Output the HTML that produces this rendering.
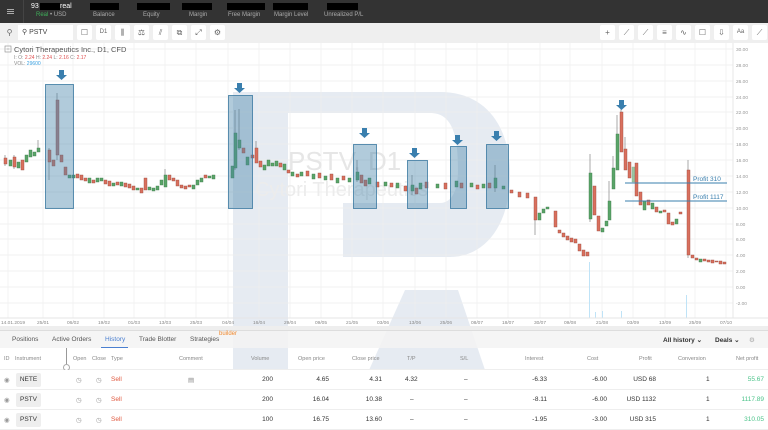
<!DOCTYPE html>
<html><head><meta charset="utf-8"><style>
*{margin:0;padding:0;box-sizing:border-box}
body{width:768px;height:428px;overflow:hidden;font-family:"Liberation Sans",sans-serif;background:#fff;position:relative;font-size:7px;color:#333}
.a{position:absolute}
.top{left:0;top:0;width:768px;height:23px;background:#333}
.blk{position:absolute;background:#000;height:7px;top:3px}
.lbl{position:absolute;top:12px;color:#aaa;font-size:6px}
.tb{left:0;top:23px;width:768px;height:20px;background:#efefef}
.btn{position:absolute;top:2px;width:15px;height:15px;background:#fff;border-radius:2px;color:#666;font-size:8px;text-align:center;line-height:15px}
.tabs{left:0;top:330px;width:768px;height:18px;background:rgba(243,243,243,.85);border-top:1px solid #ddd}
.tab{position:absolute;top:5px;font-size:6.5px;color:#555}
.hdr{left:0;top:348px;width:768px;height:22px;border-bottom:1px solid #eee}
.h{position:absolute;top:8px;font-size:5.5px;color:#888}
.row{position:absolute;left:0;width:768px;height:20px;border-bottom:1px solid #eee;background:#fff}
.c{position:absolute;top:6px;font-size:6.5px;color:#333}
.r{text-align:right}
.ins{position:absolute;left:16px;top:3px;width:25px;height:14px;background:#eee;border-radius:2px;font-size:6.5px;text-align:center;line-height:14px;color:#333}
</style></head><body>
<svg class="a" style="left:0;top:0" width="768" height="428">
 <g fill="rgba(205,215,230,0.5)">
  <path d="M233 92H440C485 92 510 125 510 175C510 225 485 257 450 257H343V203H440C452 203 458 190 458 170C458 130 450 113 430 113H288V428H233Z"/>
  <path d="M405 290H458L485 370V428H343Z"/>
 </g>
</svg>
<div class="a top">
 <div class="a" style="left:7px;top:9px;width:7px;height:1px;background:#aaa;box-shadow:0 2px #aaa,0 4px #aaa"></div>
 <div class="a" style="left:23px;top:0;width:1px;height:23px;background:#444"></div>
 <div class="a" style="left:31px;top:3px;color:#fff;font-size:7px">93</div>
 <div class="blk" style="left:40px;width:20px"></div>
 <div class="a" style="left:60px;top:3px;color:#fff;font-size:7px">real</div>
 <div class="a" style="left:36px;top:12px;color:#3fae5a;font-size:6px">Real <span style="color:#aaa">• USD</span></div>
 <div class="blk" style="left:90px;width:29px"></div><div class="lbl" style="left:93px">Balance</div>
 <div class="blk" style="left:137px;width:33px"></div><div class="lbl" style="left:143px">Equity</div>
 <div class="blk" style="left:182px;width:30px"></div><div class="lbl" style="left:189px">Margin</div>
 <div class="blk" style="left:227px;width:38px"></div><div class="lbl" style="left:228px">Free Margin</div>
 <div class="blk" style="left:273px;width:35px"></div><div class="lbl" style="left:274px">Margin Level</div>
 <div class="blk" style="left:327px;width:31px"></div><div class="lbl" style="left:324px">Unrealized P/L</div>
</div>
<div class="a tb">
 <div class="btn" style="left:2px;background:none">⚲</div>
 <div class="a" style="left:18px;top:2px;width:55px;height:15px;background:#fff;font-size:7px;line-height:15px;padding-left:4px;color:#444">⚲ PSTV</div>
 <div class="btn" style="left:77px">☐</div><div class="btn" style="left:96px;font-size:6px">D1</div>
 <div class="btn" style="left:115px">⫼</div><div class="btn" style="left:134px">⚖</div>
 <div class="btn" style="left:153px">⫽</div><div class="btn" style="left:172px">⧉</div>
 <div class="btn" style="left:191px">⤢</div><div class="btn" style="left:210px">⚙</div>
 <div class="btn" style="left:600px">+</div><div class="btn" style="left:619px">⟋</div>
 <div class="btn" style="left:638px">⟋</div><div class="btn" style="left:657px">≡</div>
 <div class="btn" style="left:676px">∿</div><div class="btn" style="left:695px">☐</div>
 <div class="btn" style="left:714px">⇩</div><div class="btn" style="left:733px;font-size:6px">Aa</div>
 <div class="btn" style="left:752px">⟋</div>
</div>
<svg class="a" style="left:0;top:43px" width="768" height="287" viewBox="0 43 768 287">
 <g stroke="#eeeeee" stroke-width="0.7">
  <path d="M0 49H733M0 65H733M0 81H733M0 97H733M0 112H733M0 128H733M0 144H733M0 160H733M0 176H733M0 192H733M0 208H733M0 224H733M0 239H733M0 255H733M0 271H733M0 287H733M0 303H733"/>
  <path d="M8 43V318M43 43V318M73 43V318M104 43V318M134 43V318M165 43V318M196 43V318M228 43V318M259 43V318M290 43V318M321 43V318M352 43V318M383 43V318M415 43V318M446 43V318M477 43V318M508 43V318M540 43V318M570 43V318M602 43V318M633 43V318M665 43V318M695 43V318M726 43V318"/>
 </g>
 <line x1="733" y1="43" x2="733" y2="318" stroke="#ddd" stroke-width="0.7"/>
 <text x="288" y="170" font-size="26" fill="#e6e6e6">PSTV, D1</text>
 <text x="255" y="196" font-size="20" fill="#ececec">Cytori Therapeutics</text>
 <g fill="#bfe3f7"><rect x="589" y="262" width="1" height="56"/><rect x="686" y="295" width="1" height="23"/><rect x="595" y="312" width="1" height="6"/><rect x="602" y="311" width="1" height="7"/><rect x="621" y="311" width="1" height="7"/></g>
 <g stroke="#555" stroke-width="0.5">
 <path d="M5 155V166M14 155V169M38 140V152M49 148V180M57 93V160M165 169V187M235 110V170M239 109V150M256 141V163M357 160V182M412 175V195M495 165V192M535 197V235M590 154V222M609 181V220M613 156V189M617 115V170M621 105V152M625 137V170M688 160V258"/>
 </g>
 <g fill="#5aa469" stroke="#3d7a4a" stroke-width="0.4">
 <rect x="9" y="160" width="3" height="6"/><rect x="17" y="162" width="3" height="6"/><rect x="25" y="155" width="3" height="7"/><rect x="29" y="150" width="3" height="7"/><rect x="33" y="152" width="3" height="4"/><rect x="37" y="148" width="3" height="4"/>
 <rect x="68" y="175" width="3" height="3"/><rect x="72" y="175" width="3" height="3"/><rect x="88" y="178" width="3" height="5"/><rect x="96" y="178" width="3" height="4"/><rect x="100" y="178" width="3" height="3"/><rect x="112" y="183" width="3" height="3"/><rect x="120" y="182" width="3" height="4"/><rect x="136" y="188" width="3" height="2"/><rect x="148" y="187" width="3" height="3"/><rect x="152" y="188" width="3" height="3"/><rect x="156" y="186" width="3" height="4"/><rect x="160" y="180" width="3" height="5"/><rect x="164" y="175" width="3" height="12"/><rect x="192" y="185" width="3" height="4"/><rect x="196" y="180" width="3" height="5"/><rect x="200" y="178" width="3" height="4"/><rect x="208" y="176" width="3" height="2"/><rect x="212" y="175" width="3" height="4"/>
 <rect x="231" y="166" width="3" height="12"/><rect x="234" y="133" width="3" height="35"/><rect x="238" y="140" width="3" height="8"/><rect x="246" y="157" width="3" height="8"/><rect x="263" y="165" width="3" height="5"/><rect x="267" y="160" width="3" height="6"/><rect x="271" y="163" width="3" height="3"/><rect x="275" y="161" width="3" height="5"/><rect x="283" y="164" width="3" height="6"/><rect x="291" y="172" width="3" height="4"/>
 <rect x="300" y="172" width="3" height="4"/><rect x="312" y="174" width="3" height="5"/><rect x="324" y="176" width="3" height="4"/><rect x="336" y="178" width="3" height="5"/><rect x="348" y="178" width="3" height="4"/><rect x="356" y="172" width="3" height="8"/><rect x="368" y="178" width="3" height="6"/><rect x="384" y="182" width="3" height="4"/><rect x="396" y="183" width="3" height="5"/><rect x="411" y="185" width="3" height="6"/><rect x="419" y="183" width="3" height="6"/><rect x="436" y="184" width="3" height="4"/><rect x="455" y="181" width="3" height="6"/><rect x="470" y="183" width="3" height="4"/><rect x="482" y="184" width="3" height="4"/><rect x="494" y="178" width="3" height="10"/><rect x="502" y="186" width="3" height="3"/>
 <rect x="538" y="213" width="3" height="7"/><rect x="542" y="209" width="3" height="4"/><rect x="546" y="207" width="3" height="2"/><rect x="589" y="173" width="3" height="46"/><rect x="601" y="228" width="3" height="4"/><rect x="605" y="221" width="3" height="5"/><rect x="608" y="201" width="3" height="19"/><rect x="612" y="168" width="3" height="21"/><rect x="616" y="134" width="3" height="36"/><rect x="632" y="167" width="3" height="15" opacity=".6"/><rect x="643" y="201" width="3" height="9"/><rect x="651" y="203" width="3" height="6"/><rect x="659" y="211" width="3" height="2"/><rect x="675" y="219" width="3" height="5"/><rect x="699" y="259" width="3" height="3"/>
 </g>
 <g fill="#d9705e" stroke="#9a4a3e" stroke-width="0.4">
 <rect x="4" y="158" width="3" height="6"/><rect x="13" y="157" width="3" height="10"/><rect x="21" y="160" width="3" height="10"/>
 <rect x="48" y="150" width="3" height="12"/><rect x="52" y="160" width="3" height="6"/><rect x="56" y="100" width="3" height="55" fill="#b77e7e"/><rect x="60" y="155" width="3" height="7"/><rect x="64" y="167" width="3" height="8"/><rect x="76" y="174" width="3" height="4"/><rect x="80" y="175" width="3" height="5"/><rect x="84" y="178" width="3" height="3"/><rect x="92" y="180" width="3" height="3"/><rect x="104" y="180" width="3" height="4"/><rect x="108" y="181" width="3" height="5"/><rect x="116" y="182" width="3" height="3"/><rect x="124" y="183" width="3" height="4"/><rect x="128" y="184" width="3" height="4"/><rect x="132" y="186" width="3" height="4"/><rect x="140" y="188" width="3" height="5"/><rect x="144" y="178" width="3" height="12"/><rect x="168" y="175" width="3" height="5"/><rect x="172" y="178" width="3" height="3"/><rect x="176" y="180" width="3" height="6"/><rect x="180" y="185" width="3" height="3"/><rect x="184" y="186" width="3" height="3"/><rect x="188" y="185" width="3" height="2"/><rect x="204" y="175" width="3" height="3"/>
 <rect x="242" y="148" width="3" height="5"/><rect x="251" y="155" width="3" height="3"/><rect x="255" y="148" width="3" height="15"/><rect x="259" y="161" width="3" height="6"/><rect x="279" y="163" width="3" height="4"/><rect x="287" y="170" width="3" height="3"/>
 <rect x="296" y="174" width="3" height="3"/><rect x="306" y="171" width="3" height="5"/><rect x="318" y="173" width="3" height="5"/><rect x="330" y="174" width="3" height="6"/><rect x="342" y="176" width="3" height="4"/><rect x="360" y="175" width="3" height="8"/><rect x="364" y="180" width="3" height="6"/><rect x="376" y="182" width="3" height="5"/><rect x="390" y="183" width="3" height="4"/><rect x="404" y="186" width="3" height="5"/><rect x="415" y="188" width="3" height="6"/><rect x="425" y="182" width="3" height="6"/><rect x="444" y="183" width="3" height="6"/><rect x="460" y="183" width="3" height="5"/><rect x="476" y="185" width="3" height="4"/><rect x="488" y="183" width="3" height="5"/><rect x="510" y="190" width="3" height="3"/><rect x="518" y="192" width="3" height="5"/><rect x="526" y="193" width="3" height="5"/><rect x="534" y="197" width="3" height="23"/>
 <rect x="554" y="211" width="3" height="16"/><rect x="558" y="230" width="3" height="3"/><rect x="562" y="233" width="3" height="4"/><rect x="566" y="236" width="3" height="4"/><rect x="570" y="238" width="3" height="4"/><rect x="574" y="239" width="3" height="4"/><rect x="578" y="244" width="3" height="7"/><rect x="582" y="250" width="3" height="6"/><rect x="586" y="252" width="3" height="4"/><rect x="593" y="186" width="3" height="29"/><rect x="597" y="216" width="3" height="15"/><rect x="620" y="112" width="3" height="40"/><rect x="624" y="149" width="3" height="21"/><rect x="628" y="162" width="3" height="16"/><rect x="635" y="163" width="3" height="33"/><rect x="639" y="192" width="3" height="13"/><rect x="647" y="200" width="3" height="5"/><rect x="655" y="207" width="3" height="5"/><rect x="663" y="210" width="3" height="2"/><rect x="667" y="213" width="3" height="11"/><rect x="671" y="222" width="3" height="3"/><rect x="679" y="212" width="3" height="2"/><rect x="687" y="170" width="3" height="85"/><rect x="691" y="255" width="3" height="3"/><rect x="695" y="258" width="3" height="2"/><rect x="703" y="259" width="3" height="2"/><rect x="707" y="260" width="3" height="2"/><rect x="711" y="260" width="3" height="3"/><rect x="715" y="261" width="3" height="1"/><rect x="719" y="261" width="3" height="3"/><rect x="723" y="262" width="3" height="2"/>
 </g>
 <g fill="rgba(70,130,170,0.42)" stroke="#3a78a0" stroke-width="0.8">
  <rect x="45.5" y="84.5" width="28" height="124"/><rect x="228.5" y="95.5" width="24" height="113"/><rect x="353.5" y="144.5" width="23" height="64"/><rect x="407.5" y="160.5" width="20" height="48"/><rect x="450.5" y="146.5" width="16" height="62"/><rect x="486.5" y="144.5" width="22" height="64"/>
 </g>
 <g fill="#3a7fae">
  <path d="M59 70h5v5h3l-5.5 5l-5.5-5h3z"/><path d="M237 83h5v5h3l-5.5 5l-5.5-5h3z"/><path d="M362 128h5v5h3l-5.5 5l-5.5-5h3z"/><path d="M412 148h5v5h3l-5.5 5l-5.5-5h3z"/><path d="M455 135h5v5h3l-5.5 5l-5.5-5h3z"/><path d="M494 131h5v5h3l-5.5 5l-5.5-5h3z"/><path d="M619 100h5v5h3l-5.5 5l-5.5-5h3z"/>
 </g>
 <g stroke="#3a7fae" stroke-width="1"><line x1="625" y1="183" x2="727" y2="183"/><line x1="625" y1="201" x2="727" y2="201"/></g>
 <text x="693" y="181" font-size="6.5" fill="#3a7fae">Profit 310</text>
 <text x="693" y="199" font-size="6.5" fill="#3a7fae">Profit 1117</text>
 <g font-size="4.8" fill="#999">
  <text x="736" y="51">30.00</text><text x="736" y="67">28.00</text><text x="736" y="83">26.00</text><text x="736" y="99">24.00</text><text x="736" y="114">22.00</text><text x="736" y="130">20.00</text><text x="736" y="146">18.00</text><text x="736" y="162">16.00</text><text x="736" y="178">14.00</text><text x="736" y="194">12.00</text><text x="736" y="210">10.00</text><text x="736" y="226">8.00</text><text x="736" y="241">6.00</text><text x="736" y="257">4.00</text><text x="736" y="273">2.00</text><text x="736" y="289">0.00</text><text x="736" y="305">-2.00</text>
 </g>
 <line x1="0" y1="318" x2="768" y2="318" stroke="#e5e5e5"/>
 <g font-size="4.8" fill="#888" text-anchor="middle">
  <text x="13" y="324">14.01.2019</text><text x="43" y="324">25/01</text><text x="73" y="324">06/02</text><text x="104" y="324">19/02</text><text x="134" y="324">01/03</text><text x="165" y="324">13/03</text><text x="196" y="324">25/03</text><text x="228" y="324">04/04</text><text x="259" y="324">16/04</text><text x="290" y="324">29/04</text><text x="321" y="324">09/05</text><text x="352" y="324">21/05</text><text x="383" y="324">03/06</text><text x="415" y="324">13/06</text><text x="446" y="324">25/06</text><text x="477" y="324">08/07</text><text x="508" y="324">18/07</text><text x="540" y="324">30/07</text><text x="570" y="324">09/08</text><text x="602" y="324">21/08</text><text x="633" y="324">03/09</text><text x="665" y="324">13/09</text><text x="695" y="324">25/09</text><text x="726" y="324">07/10</text>
 </g>
 <rect x="0" y="326" width="768" height="4" fill="#eee"/>
 <rect x="5" y="46" width="6" height="6" fill="none" stroke="#888" stroke-width="0.6"/><line x1="6.5" y1="49" x2="9.5" y2="49" stroke="#888" stroke-width="0.6"/>
 <text x="14" y="52" font-size="7.5" fill="#555">Cytori Therapeutics Inc.,  D1,  CFD</text>
 <text x="14" y="59" font-size="5" fill="#888">I: O: <tspan fill="#e05050">2.24</tspan> H: <tspan fill="#e05050">2.24</tspan> L: <tspan fill="#e05050">2.16</tspan> C: <tspan fill="#e05050">2.17</tspan></text>
 <text x="14" y="65" font-size="5" fill="#888">VOL: <tspan fill="#3aa0e0">29600</tspan></text>
</svg>
<div class="a tabs">
 <div class="tab" style="left:12px">Positions</div><div class="tab" style="left:52px">Active Orders</div>
 <div class="tab" style="left:105px;color:#4a7fd0">History</div><div class="a" style="left:101px;top:16px;width:27px;height:1px;background:#4a7fd0"></div>
 <div class="tab" style="left:139px">Trade Blotter</div><div class="tab" style="left:190px">Strategies</div>
 <div class="a" style="left:219px;top:0;font-size:6px;color:#f08a30">builder</div>
 <div class="tab" style="left:663px;color:#333;font-weight:bold">All history ⌄</div>
 <div class="tab" style="left:715px;color:#333;font-weight:bold">Deals ⌄</div>
 <div class="tab" style="left:749px;color:#aaa">⚙</div>
</div>
<div class="a hdr">
 <div class="h" style="left:4px">ID</div><div class="h" style="left:15px">Instrument</div>
 <div class="h" style="left:73px">Open</div><div class="h" style="left:92px">Close</div><div class="h" style="left:111px">Type</div>
 <div class="h" style="left:179px">Comment</div><div class="h" style="left:251px">Volume</div><div class="h" style="left:298px">Open price</div><div class="h" style="left:352px">Close price</div>
 <div class="h" style="left:407px">T/P</div><div class="h" style="left:460px">S/L</div><div class="h" style="left:525px">Interest</div><div class="h" style="left:587px">Cost</div><div class="h" style="left:639px">Profit</div><div class="h" style="left:678px">Conversion</div><div class="h" style="left:736px">Net profit</div>
 <div class="a" style="left:66px;top:0;width:1px;height:16px;background:#999"></div>
 <div class="a" style="left:63px;top:16px;width:7px;height:7px;border:1px solid #aaa;border-radius:50%;background:#fff"></div>
</div>
<div class="row" style="top:370px">
 <div class="c" style="left:4px;color:#999">◉</div><div class="ins">NETE</div>
 <div class="c" style="left:76px;color:#999">◷</div><div class="c" style="left:96px;color:#999">◷</div><div class="c" style="left:111px;color:#e05a40">Sell</div>
 <div class="c" style="left:188px;color:#888">▤</div>
 <div class="c r" style="left:240px;width:33px">200</div><div class="c r" style="left:290px;width:39px">4.65</div><div class="c r" style="left:340px;width:42px">4.31</div>
 <div class="c" style="left:405px">4.32</div><div class="c" style="left:464px">–</div>
 <div class="c r" style="left:520px;width:27px">-6.33</div><div class="c r" style="left:580px;width:27px">-6.00</div><div class="c r" style="left:620px;width:36px">USD 68</div><div class="c" style="left:706px">1</div><div class="c r" style="left:720px;width:44px;color:#4cc38a">55.67</div>
</div>
<div class="row" style="top:390px">
 <div class="c" style="left:4px;color:#999">◉</div><div class="ins">PSTV</div>
 <div class="c" style="left:76px;color:#999">◷</div><div class="c" style="left:96px;color:#999">◷</div><div class="c" style="left:111px;color:#e05a40">Sell</div>
 <div class="c r" style="left:240px;width:33px">200</div><div class="c r" style="left:290px;width:39px">16.04</div><div class="c r" style="left:340px;width:42px">10.38</div>
 <div class="c" style="left:410px">–</div><div class="c" style="left:464px">–</div>
 <div class="c r" style="left:520px;width:27px">-8.11</div><div class="c r" style="left:580px;width:27px">-6.00</div><div class="c r" style="left:620px;width:36px">USD 1132</div><div class="c" style="left:706px">1</div><div class="c r" style="left:720px;width:44px;color:#4cc38a">1117.89</div>
</div>
<div class="row" style="top:410px">
 <div class="c" style="left:4px;color:#999">◉</div><div class="ins">PSTV</div>
 <div class="c" style="left:76px;color:#999">◷</div><div class="c" style="left:96px;color:#999">◷</div><div class="c" style="left:111px;color:#e05a40">Sell</div>
 <div class="c r" style="left:240px;width:33px">100</div><div class="c r" style="left:290px;width:39px">16.75</div><div class="c r" style="left:340px;width:42px">13.60</div>
 <div class="c" style="left:410px">–</div><div class="c" style="left:464px">–</div>
 <div class="c r" style="left:520px;width:27px">-1.95</div><div class="c r" style="left:580px;width:27px">-3.00</div><div class="c r" style="left:620px;width:36px">USD 315</div><div class="c" style="left:706px">1</div><div class="c r" style="left:720px;width:44px;color:#4cc38a">310.05</div>
</div>
</body></html>
